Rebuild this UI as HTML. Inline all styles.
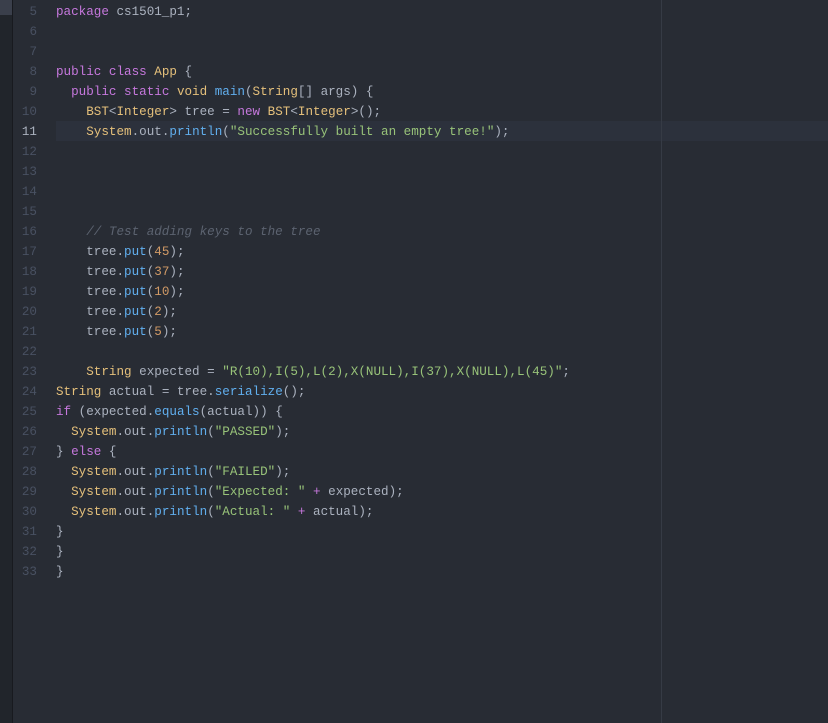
<!DOCTYPE html>
<html><head><meta charset="utf-8"><style>
html,body{margin:0;padding:0;width:828px;height:723px;overflow:hidden;background:#282c34;}
#side{position:absolute;left:0;top:0;width:12px;height:723px;background:#21252b;border-right:1px solid #181a1f;}
#tab{position:absolute;left:0;top:0;width:12px;height:15px;background:#3a3f4b;}
#hl{position:absolute;left:56px;right:0;top:121px;height:20px;background:#2c313c;}
#guide{position:absolute;left:661px;top:0;width:1px;height:723px;background:#363b45;}
.ln{position:absolute;left:13px;width:24px;text-align:right;color:#495162;}
.ln.a{color:#abb2bf;}
.c{position:absolute;left:56px;white-space:pre;color:#abb2bf;}
.ln,.c{font-family:"Liberation Mono",monospace;font-size:12.6px;line-height:20px;height:20px;}
.k{color:#c678dd}.t{color:#e5c07b}.f{color:#61afef}.s{color:#98c379}.n{color:#d19a66}.cm{color:#5c6370;font-style:italic}
</style></head><body>
<div id="side"></div><div id="tab"></div><div id="hl"></div><div id="guide"></div>
<div class="ln" style="top:2px">5</div><div class="c" style="top:2px"><span class="k">package</span> cs1501_p1;</div>
<div class="ln" style="top:22px">6</div>
<div class="ln" style="top:42px">7</div>
<div class="ln" style="top:62px">8</div><div class="c" style="top:62px"><span class="k">public class</span> <span class="t">App</span> {</div>
<div class="ln" style="top:82px">9</div><div class="c" style="top:82px">  <span class="k">public static</span> <span class="t">void</span> <span class="f">main</span>(<span class="t">String</span>[] args) {</div>
<div class="ln" style="top:102px">10</div><div class="c" style="top:102px">    <span class="t">BST</span>&lt;<span class="t">Integer</span>&gt; tree = <span class="k">new</span> <span class="t">BST</span>&lt;<span class="t">Integer</span>&gt;();</div>
<div class="ln a" style="top:122px">11</div><div class="c" style="top:122px">    <span class="t">System</span>.out.<span class="f">println</span>(<span class="s">"Successfully built an empty tree!"</span>);</div>
<div class="ln" style="top:142px">12</div>
<div class="ln" style="top:162px">13</div>
<div class="ln" style="top:182px">14</div>
<div class="ln" style="top:202px">15</div>
<div class="ln" style="top:222px">16</div><div class="c" style="top:222px">    <span class="cm">// Test adding keys to the tree</span></div>
<div class="ln" style="top:242px">17</div><div class="c" style="top:242px">    tree.<span class="f">put</span>(<span class="n">45</span>);</div>
<div class="ln" style="top:262px">18</div><div class="c" style="top:262px">    tree.<span class="f">put</span>(<span class="n">37</span>);</div>
<div class="ln" style="top:282px">19</div><div class="c" style="top:282px">    tree.<span class="f">put</span>(<span class="n">10</span>);</div>
<div class="ln" style="top:302px">20</div><div class="c" style="top:302px">    tree.<span class="f">put</span>(<span class="n">2</span>);</div>
<div class="ln" style="top:322px">21</div><div class="c" style="top:322px">    tree.<span class="f">put</span>(<span class="n">5</span>);</div>
<div class="ln" style="top:342px">22</div>
<div class="ln" style="top:362px">23</div><div class="c" style="top:362px">    <span class="t">String</span> expected = <span class="s">"R(10),I(5),L(2),X(NULL),I(37),X(NULL),L(45)"</span>;</div>
<div class="ln" style="top:382px">24</div><div class="c" style="top:382px"><span class="t">String</span> actual = tree.<span class="f">serialize</span>();</div>
<div class="ln" style="top:402px">25</div><div class="c" style="top:402px"><span class="k">if</span> (expected.<span class="f">equals</span>(actual)) {</div>
<div class="ln" style="top:422px">26</div><div class="c" style="top:422px">  <span class="t">System</span>.out.<span class="f">println</span>(<span class="s">"PASSED"</span>);</div>
<div class="ln" style="top:442px">27</div><div class="c" style="top:442px">} <span class="k">else</span> {</div>
<div class="ln" style="top:462px">28</div><div class="c" style="top:462px">  <span class="t">System</span>.out.<span class="f">println</span>(<span class="s">"FAILED"</span>);</div>
<div class="ln" style="top:482px">29</div><div class="c" style="top:482px">  <span class="t">System</span>.out.<span class="f">println</span>(<span class="s">"Expected: "</span> <span class="k">+</span> expected);</div>
<div class="ln" style="top:502px">30</div><div class="c" style="top:502px">  <span class="t">System</span>.out.<span class="f">println</span>(<span class="s">"Actual: "</span> <span class="k">+</span> actual);</div>
<div class="ln" style="top:522px">31</div><div class="c" style="top:522px">}</div>
<div class="ln" style="top:542px">32</div><div class="c" style="top:542px">}</div>
<div class="ln" style="top:562px">33</div><div class="c" style="top:562px">}</div>
</body></html>
